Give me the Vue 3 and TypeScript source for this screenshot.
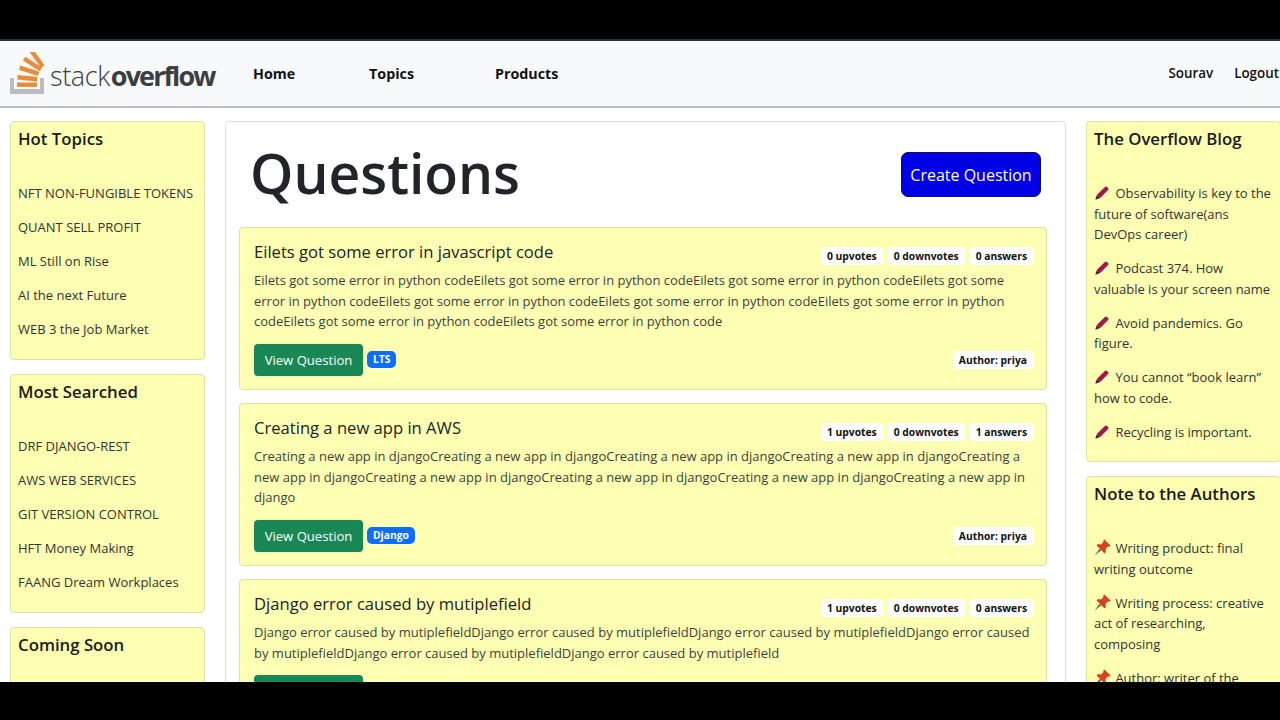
<script setup lang="ts">
interface Question {
  title: string;
  body: string;
  upvotes: number;
  downvotes: number;
  answers: number;
  tag: string;
  author: string;
}

const hotTopics = ["NFT NON-FUNGIBLE TOKENS", "QUANT SELL PROFIT", "ML Still on Rise", "AI the next Future", "WEB 3 the Job Market"];
const mostSearched = ["DRF DJANGO-REST", "AWS WEB SERVICES", "GIT VERSION CONTROL", "HFT Money Making", "FAANG Dream Workplaces"];
const blogPosts = [
  "Observability is key to the future of software(ans DevOps career)",
  "Podcast 374. How valuable is your screen name",
  "Avoid pandemics. Go figure.",
  "You cannot “book learn” how to code.",
  "Recycling is important.",
];
const notes = [
  "Writing product: final writing outcome",
  "Writing process: creative act of researching, composing",
  "Author: writer of the",
];

const questions: Question[] = [
  {
    title: "Eilets got some error in javascript code",
    body: "Eilets got some error in python code".repeat(9),
    upvotes: 0,
    downvotes: 0,
    answers: 0,
    tag: "LTS",
    author: "priya",
  },
  {
    title: "Creating a new app in AWS",
    body: "Creating a new app in django".repeat(9),
    upvotes: 1,
    downvotes: 0,
    answers: 1,
    tag: "Django",
    author: "priya",
  },
  {
    title: "Django error caused by mutiplefield",
    body: "Django error caused by mutiplefield".repeat(6),
    upvotes: 1,
    downvotes: 0,
    answers: 0,
    tag: "Django",
    author: "priya",
  },
];
</script>

<template>
  <div class="screen">
    <div class="letterbox top"></div>
    <div class="page">
      <nav class="navbar">
        <div class="brand">
          <svg class="logo-mark" width="36" height="42" viewBox="0 0 36 42">
            <path d="M0 26h4v11h26V26h4v16H0z" fill="#bdbcbc" />
            <g fill="#e98b37">
              <rect x="7" y="30.5" width="20" height="4.4" />
              <rect x="7.4" y="24" width="20" height="4.4" transform="rotate(6 17 26)" />
              <rect x="9" y="16.5" width="20" height="4.4" transform="rotate(18 19 19)" />
              <rect x="12.5" y="9.5" width="20" height="4.4" transform="rotate(33 22 12)" />
              <rect x="17.5" y="4.5" width="19" height="4.4" transform="rotate(54 27 7)" />
            </g>
          </svg>
          <span class="wordmark"><span class="light">stack</span><span class="heavy">overflow</span></span>
        </div>
        <ul class="nav-links">
          <li class="home">Home</li>
          <li class="topics">Topics</li>
          <li>Products</li>
        </ul>
        <ul class="nav-user">
          <li>Sourav</li>
          <li>Logout</li>
        </ul>
      </nav>

      <div class="columns">
        <aside class="side">
          <section class="panel">
            <h3>Hot Topics</h3>
            <ul class="topic-list">
              <li v-for="t in hotTopics" :key="t">{{ t }}</li>
            </ul>
          </section>
          <section class="panel">
            <h3>Most Searched</h3>
            <ul class="topic-list">
              <li v-for="t in mostSearched" :key="t">{{ t }}</li>
            </ul>
          </section>
          <section class="panel">
            <h3>Coming Soon</h3>
          </section>
        </aside>

        <main class="main">
          <header class="main-head">
            <h1>Questions</h1>
            <button class="create">Create Question</button>
          </header>
          <article v-for="q in questions" :key="q.title" class="question">
            <div class="q-top">
              <h5>{{ q.title }}</h5>
              <div class="stats">
                <span class="chip">{{ q.upvotes }} upvotes</span>
                <span class="chip">{{ q.downvotes }} downvotes</span>
                <span class="chip">{{ q.answers }} answers</span>
              </div>
            </div>
            <p>{{ q.body }}</p>
            <div class="q-foot">
              <button class="view">View Question</button>
              <span class="tag">{{ q.tag }}</span>
              <span class="chip author">Author: {{ q.author }}</span>
            </div>
          </article>
        </main>

        <aside class="side">
          <section class="panel">
            <h3>The Overflow Blog</h3>
            <ul class="note-list">
              <li v-for="b in blogPosts" :key="b">
                <svg class="emoji" width="16" height="16" viewBox="0 0 16 16">
                  <path d="M3 9.8 10.9 1.9a1.5 1.5 0 0 1 2.1 0l1.1 1.1a1.5 1.5 0 0 1 0 2.1L6.2 13z" fill="#a5164f" />
                  <path d="M3 9.8 6.2 13l-4 1.5a.5.5 0 0 1-.7-.7z" fill="#4a2030" />
                </svg>
                {{ b }}
              </li>
            </ul>
          </section>
          <section class="panel">
            <h3>Note to the Authors</h3>
            <ul class="note-list">
              <li v-for="n in notes" :key="n">
                <svg class="emoji pin" width="17" height="17" viewBox="0 0 16 16">
                  <path d="M.6 15.6 5.4 9.2l1.5 1.5z" fill="#5a5a5a" />
                  <path d="M9.8.4 15.8 6.3l-1.4 1.1-1.3-.3-2.2 2.3.3 2.9-1.3 1.3L2.4 6.1l1.3-1.3 2.9.3 2.3-2.2-.3-1.3z" fill="#d8431f" />
                </svg>
                {{ n }}
              </li>
            </ul>
          </section>
        </aside>
      </div>
    </div>
    <div class="letterbox bottom"></div>
  </div>
</template>

<style>
html,
body {
  margin: 0;
  background: #000;
}
</style>

<style scoped>
.screen {
  width: 1280px;
  height: 720px;
  display: flex;
  flex-direction: column;
  overflow: hidden;
  background: #000;
  font-family: "Open Sans", "Noto Sans", sans-serif;
  color: #212529;
}
.letterbox.top {
  height: 39px;
  flex: none;
  background: #000;
  border-bottom: 2px solid #2b303a;
}
.letterbox.bottom {
  height: 38px;
  flex: none;
  background: #000;
}
.page {
  flex: 1;
  min-height: 0;
  overflow: hidden;
  background: #fff;
}
ul {
  list-style: none;
  margin: 0;
  padding: 0;
}
.navbar {
  height: 64px;
  display: flex;
  align-items: center;
  background: #f8f9fa;
  border-bottom: 2px solid #bfbfbf;
  padding-left: 10px;
  padding-bottom: 1px;
  color: #111;
}
.brand {
  display: flex;
  align-items: center;
  width: 243px;
}
.logo-mark {
  flex: none;
}
.wordmark {
  font-family: "Open Sans", sans-serif;
  font-size: 27px;
  color: #3b3d40;
  margin-left: 4px;
  padding-top: 4px;
  white-space: nowrap;
}
.light {
  font-weight: 300;
  letter-spacing: -0.4px;
}
.heavy {
  font-weight: 700;
  letter-spacing: -1.9px;
  margin-left: 1px;
}
.nav-links {
  display: flex;
  font-size: 14.3px;
  font-weight: 700;
}
.nav-links .home {
  width: 116px;
}
.nav-links .topics {
  width: 126px;
}
.nav-user {
  margin-left: auto;
  display: flex;
  gap: 21px;
  font-size: 13.4px;
  font-weight: 600;
  margin-right: 1px;
  white-space: nowrap;
}
.columns {
  display: flex;
  gap: 20px;
  padding: 13px 0 0 10px;
  align-items: flex-start;
}
.side {
  width: 195px;
  flex: none;
  display: flex;
  flex-direction: column;
  gap: 14px;
}
.panel {
  box-sizing: border-box;
  background: #fdffb2;
  border: 1px solid #dfdfa8;
  border-radius: 4px;
  padding: 7px 7px 14px;
  min-height: 40px;
}
.panel h3 {
  margin: 0 0 34px;
  font-size: 16.8px;
  line-height: 20px;
  font-weight: 600;
  color: #1a1a1a;
}
.topic-list li {
  font-size: 13px;
  line-height: 20px;
  margin-bottom: 14px;
  color: #333;
  white-space: nowrap;
}
.topic-list li:last-child {
  margin-bottom: 6px;
}
.note-list li {
  font-size: 13px;
  line-height: 20.5px;
  margin-bottom: 13.5px;
  color: #333;
}
.note-list li:last-child {
  margin-bottom: 5px;
}
.emoji {
  vertical-align: -3px;
  margin-right: 2px;
}
.emoji.pin {
  margin-right: 1px;
}
.main {
  width: 841px;
  flex: none;
  box-sizing: border-box;
  background: #fff;
  border: 1px solid #dcdcdc;
  border-radius: 4px;
  padding: 0 18px 0 13px;
  height: 700px;
}
.main-head {
  display: flex;
  align-items: center;
  justify-content: space-between;
  height: 105px;
  padding: 0 6px 0 11px;
}
.main-head h1 {
  margin: 0 0 3px;
  font-size: 55.2px;
  font-weight: 600;
  color: #212529;
  line-height: 1.2;
}
.create {
  width: 140px;
  height: 45px;
  box-sizing: border-box;
  background: #0000e6;
  border: 1px solid #10104a;
  border-radius: 7px;
  color: #fff;
  font-family: inherit;
  font-size: 16px;
  padding: 0;
}
.question {
  background: #fdffb2;
  border: 1px solid #dfdfa8;
  border-radius: 4px;
  padding: 10px 13px 13px 14px;
  margin-bottom: 13.5px;
}
.q-top {
  display: flex;
  justify-content: space-between;
  align-items: center;
}
h5 {
  margin: -1px 0 1px;
  font-size: 16.6px;
  font-weight: 500;
  line-height: 29px;
  color: #222;
}
.stats {
  display: flex;
  gap: 5px;
  margin-top: 6px;
}
.chip {
  background: #fff;
  border-radius: 3px;
  padding: 2px 6px;
  font-size: 10.3px;
  font-weight: 700;
  line-height: 14px;
  color: #111;
  white-space: nowrap;
}
.question p {
  margin: 3px 0 12px;
  font-size: 13px;
  line-height: 20.5px;
  color: #3d3f3f;
}
.q-foot {
  display: flex;
  align-items: center;
}
.view {
  width: 109px;
  height: 32px;
  padding: 0;
  background: #198754;
  border: none;
  border-radius: 4px;
  color: #fff;
  font-family: inherit;
  font-size: 13.1px;
}
.tag {
  margin-left: 4px;
  background: #0d6efd;
  color: #fff;
  border-radius: 5px;
  padding: 2px 6px;
  font-size: 10.3px;
  font-weight: 700;
  line-height: 13px;
}
.author {
  margin-left: auto;
}
</style>
